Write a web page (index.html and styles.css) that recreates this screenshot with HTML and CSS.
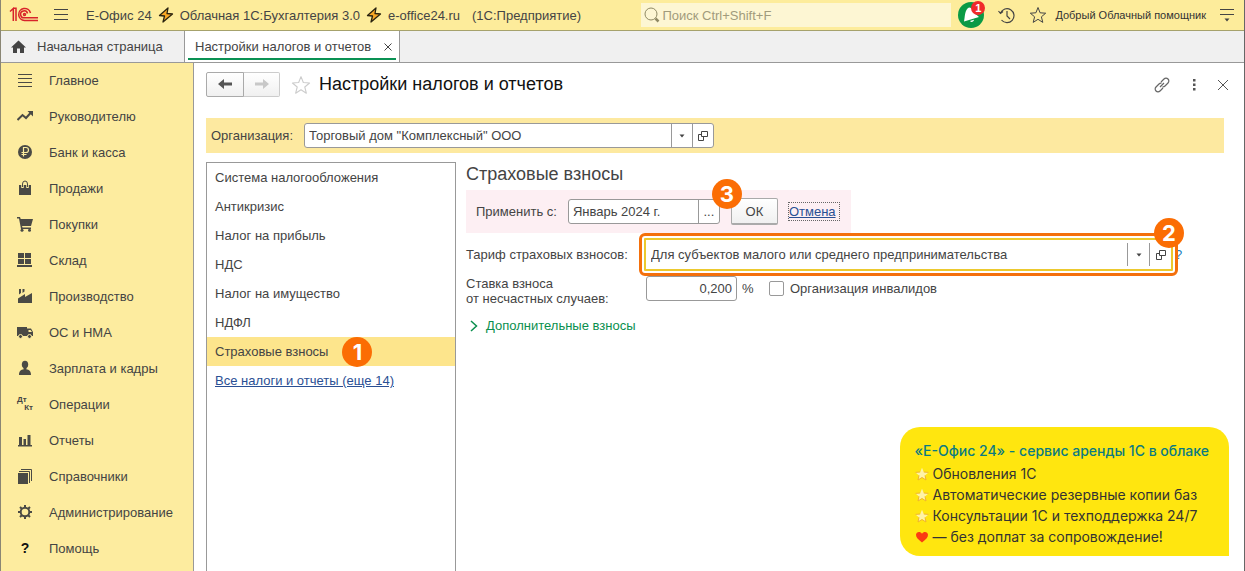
FILE: index.html
```
<!DOCTYPE html>
<html lang="ru">
<head>
  <meta charset="UTF-8">
  <meta name="viewport" content="width=device-width, initial-scale=1.0">
  <title>Настройки налогов и отчетов</title>
  <link rel="stylesheet" href="styles.css">
</head>
<body>
  <!-- Shared icons -->
  <svg class="sprite" width="0" height="0">
    <symbol id="bolt" viewBox="0 0 16 16"><path d="M10 1 1.500 8.500 6.500 9 5 15 14.500 7 9 6.500Z" fill="#f9a825" stroke="#2b2410" stroke-width="1.300" stroke-linejoin="round"/></symbol>
    <symbol id="open" viewBox="0 0 10 10"><path d="M3.500.5h6v5h-6zM3.500 3.500h-3v6h5v-4" fill="none" stroke="#444"/></symbol>
    <symbol id="down" viewBox="0 0 6 4"><path d="M.5.5h5L3 3.500Z" fill="#444"/></symbol>
    <symbol id="star" viewBox="0 0 18 18"><path d="m9 1.500 2.100 5.300 5.600.4-4.300 3.600 1.400 5.600L9 13.300l-4.800 3.100 1.400-5.600L1.300 7.200l5.600-.4Z" fill="none" stroke="currentColor" stroke-linejoin="round"/></symbol>
    <symbol id="gold-star" viewBox="0 0 14 14"><path d="m7 .8 1.800 4.200 4.700.4L10 8.400l1 4.600-4-2.500L3 13l1-4.600L.5 5.400 5.200 5Z" fill="#fff3a6"/><path d="m10 8.400 1 4.600-4-2.500L3 13l1-4.600M.5 5.400 5.200 5M13.500 5.400 8.800 5" fill="none" stroke="#f0b52c"/></symbol>
  </svg>

  <header class="topbar">
    <svg class="logo" width="30" height="16" viewBox="0 0 30 16" fill="none" stroke="#d8232a" stroke-width="1.500">
      <path d="M1 4.500 4.300 1.500V14M7 14V1.300H4.300"/>
      <path d="M21.500 6A6 6 0 1 0 15.500 13.500H29M18.500 6.500A3.500 3.500 0 1 0 15.500 10.800H29"/>
      <circle cx="15.500" cy="7.500" r="1"/>
    </svg>
    <button class="icon-btn menu-btn" aria-label="Меню">
      <svg width="14" height="12" viewBox="0 0 14 12" stroke="#444"><path d="M0 .5h14M0 5.500h14M0 10.500h14"/></svg>
    </button>
    <div class="app-title">
      <span>Е-Офис 24</span><svg width="16" height="16"><use href="#bolt"/></svg>
      <span>Облачная 1С:Бухгалтерия 3.0</span><svg width="16" height="16"><use href="#bolt"/></svg>
      <span>e-office24.ru</span><span class="platform">(1С:Предприятие)</span>
    </div>
    <div class="search">
      <svg width="16" height="16" viewBox="0 0 16 16" fill="none" stroke="#8f8964"><circle cx="7" cy="7" r="6"/><path d="m11.500 11.500 3 3" stroke-width="2.500"/></svg>
      <input type="search" placeholder="Поиск Ctrl+Shift+F" aria-label="Поиск">
    </div>
    <button class="icon-btn bell" aria-label="Уведомления">
      <svg width="26" height="26" viewBox="0 0 26 26"><circle cx="13" cy="13" r="13" fill="#0a9a45"/><path d="M11 5.500c4 0 5 4 6.500 6.500l3.500 3L6 19.500c1-4 .500-12 5-14Z" fill="#fff"/><path d="m12 19 4-1.200a2.200 2.200 0 0 1-4 1.200Z" fill="#fff"/></svg>
      <span class="bell-count">1</span>
    </button>
    <button class="icon-btn" aria-label="История">
      <svg width="17" height="17" viewBox="0 0 17 17" fill="none" stroke="#444" stroke-width="1.200"><path d="M2.500 6A7 7 0 1 1 3.500 13M.5 4l2 2.500L5 4.500M9 4v5l3 3"/></svg>
    </button>
    <button class="icon-btn" aria-label="Избранное"><svg width="18" height="18"><use href="#star"/></svg></button>
    <span class="user">Добрый Облачный помощник</span>
    <button class="icon-btn" aria-label="Настройки окна">
      <svg width="14" height="14" viewBox="0 0 14 14"><path d="M0 1.500h14M0 6.500h14" stroke="#444"/><path d="M4.500 10.500h5L7 13.500Z" fill="#444"/></svg>
    </button>
  </header>

  <nav class="tabs">
    <a class="tab home-tab" href="#">
      <svg width="15" height="13" viewBox="0 0 15 13"><path d="M7.500.5 0 7.500h2V13h4V8.500h3V13h4V7.500h2Z" fill="#444"/></svg>
      Начальная страница
    </a>
    <div class="tab active-tab">
      <a href="#">Настройки налогов и отчетов</a>
      <button class="icon-btn" aria-label="Закрыть вкладку"><svg width="8" height="8" viewBox="0 0 8 8" stroke="#444"><path d="m.5.5 7 7m0-7-7 7"/></svg></button>
    </div>
  </nav>

  <div class="workspace">
    <nav class="sidebar">
      <a href="#"><svg viewBox="0 0 16 16" stroke="#4a4a45"><path d="M1 2.500h14M1 6.500h14M1 10.500h14M1 14.500h14"/></svg>Главное</a>
      <a href="#"><svg viewBox="0 0 16 16"><path d="m.5 12 5-5 3.500 3L14 4.500" fill="none" stroke="#4a4a45" stroke-width="2"/><path d="M10.500 3H16v5.500Z" fill="#4a4a45"/></svg>Руководителю</a>
      <a href="#"><svg viewBox="0 0 16 16"><circle cx="8" cy="8" r="7" fill="#4a4a45"/><path d="M6.500 12.500v-9H9a2.300 2.300 0 0 1 0 5H4.500M4.500 10.500h5" fill="none" stroke="#fdee9f" stroke-width="1.200"/></svg>Банк и касса</a>
      <a href="#"><svg viewBox="0 0 16 16"><path d="M2 5h12v10H2z" fill="#4a4a45"/><path d="M5.500 8V4a2.500 3 0 0 1 5 0v4" fill="none" stroke="#fdee9f" stroke-width="2.500"/><path d="M5.500 7V4a2.500 3 0 0 1 5 0v3" fill="none" stroke="#4a4a45"/></svg>Продажи</a>
      <a href="#"><svg viewBox="0 0 16 16" fill="#4a4a45"><path d="M0 1h3l.7 2H16l-2 7H5l.5 1.500H14V13H4L2 2.500H0z"/><circle cx="5" cy="14.300" r="1.500"/><circle cx="12.500" cy="14.300" r="1.500"/></svg>Покупки</a>
      <a href="#"><svg viewBox="0 0 16 16" fill="#4a4a45"><path d="M1 1h6v5H1zM8 1h6v5H8zM1 7h6v5H1zM8 7h6v5H8zM0 13h15v2H0z"/></svg>Склад</a>
      <a href="#"><svg viewBox="0 0 16 16" fill="#4a4a45"><path d="M1 15v-4.500l7-4.500v3L15 5v10zM2 1h2v4L2 6.500zM5.500 1h2v2.500L5.500 5z"/></svg>Производство</a>
      <a href="#"><svg viewBox="0 0 16 16"><path d="M0 3h10v1.500h4L16 8v4H0z" fill="#4a4a45"/><path d="M11.500 6h2L15 8h-3.500z" fill="#fdee9f"/><g fill="#4a4a45" stroke="#fdee9f"><circle cx="3.500" cy="12.500" r="2"/><circle cx="12.500" cy="12.500" r="2"/></g></svg>ОС и НМА</a>
      <a href="#"><svg viewBox="0 0 16 16" fill="#4a4a45"><ellipse cx="8" cy="4.500" rx="3.200" ry="3.800"/><path d="M6.500 7h3v2.500h-3zM2 15c0-4 2-5.500 4.500-5.500h3C12 9.500 14 11 14 15z"/></svg>Зарплата и кадры</a>
      <a href="#"><span class="dtkt"><b>Дт</b><b>Кт</b></span>Операции</a>
      <a href="#"><svg viewBox="0 0 16 16" fill="#4a4a45"><path d="M1 13h14v1.500H1zM2 5h3v8H2zM6.500 7h2.500v6H6.500zM10.500 3h3v10h-3z"/></svg>Отчеты</a>
      <a href="#"><svg viewBox="0 0 16 16"><path d="M1 5h10v11H1z" fill="#4a4a45"/><path d="M2 3.500h10.500V15M4 1.500h10.500V13" fill="none" stroke="#4a4a45"/></svg>Справочники</a>
      <a href="#"><svg viewBox="0 0 16 16" fill="none" stroke="#4a4a45"><circle cx="8" cy="8" r="4.300" stroke-width="2"/><path d="M8 1v2.500M8 12.500V15M1 8h2.500M12.500 8H15M3 3l1.800 1.800M11.200 11.200 13 13M3 13l1.800-1.800M11.200 4.800 13 3" stroke-width="2"/></svg>Администрирование</a>
      <a href="#"><b class="question">?</b>Помощь</a>
    </nav>

    <main class="page">
      <div class="page-head">
        <div class="history-btns">
          <button aria-label="Назад"><svg width="14" height="10" viewBox="0 0 14 10" fill="#555"><path d="M0 5 6 0v3.500h8v3H6V10z"/></svg></button>
          <button aria-label="Вперед" disabled><svg width="14" height="10" viewBox="0 0 14 10" fill="#c8c8c8"><path d="M14 5 8 0v3.500H0v3h8V10z"/></svg></button>
        </div>
        <button class="icon-btn fav" aria-label="В избранное"><svg width="20" height="20"><use href="#star"/></svg></button>
        <h1>Настройки налогов и отчетов</h1>
        <div class="page-tools">
          <button class="icon-btn" aria-label="Ссылка"><svg width="16" height="16" viewBox="0 0 16 16" fill="none" stroke="#666" stroke-width="1.200"><path d="M7 5 10 2a2.800 2.800 0 0 1 4 4l-3 3a2.800 2.800 0 0 1-2.500.8M9 11l-3 3a2.800 2.800 0 0 1-4-4l3-3a2.800 2.800 0 0 1 2.500-.8M6 10l4-4"/></svg></button>
          <button class="icon-btn" aria-label="Еще"><svg width="4" height="12" viewBox="0 0 4 12" fill="#555"><path d="M1 0h2.500v2.500H1zM1 4.500h2.500V7H1zM1 9h2.500v2.500H1z"/></svg></button>
          <button class="icon-btn" aria-label="Закрыть"><svg width="10" height="10" viewBox="0 0 10 10" stroke="#555"><path d="m0 0 10 10M10 0 0 10"/></svg></button>
        </div>
      </div>

      <div class="org-bar">
        <label for="org">Организация:</label>
        <div class="field org-field">
          <input type="text" id="org" value="Торговый дом &quot;Комплексный&quot; ООО">
          <button aria-label="Выбрать организацию"><svg width="6" height="4"><use href="#down"/></svg></button>
          <button aria-label="Открыть организацию"><svg width="10" height="10"><use href="#open"/></svg></button>
        </div>
      </div>

      <div class="columns">
        <ul class="sections">
          <li><a href="#">Система налогообложения</a></li>
          <li><a href="#">Антикризис</a></li>
          <li><a href="#">Налог на прибыль</a></li>
          <li><a href="#">НДС</a></li>
          <li><a href="#">Налог на имущество</a></li>
          <li><a href="#">НДФЛ</a></li>
          <li class="selected"><a href="#">Страховые взносы</a><span class="step">1</span></li>
          <li><a class="link" href="#">Все налоги и отчеты (еще 14)</a></li>
        </ul>

        <form class="settings">
          <h2>Страховые взносы</h2>

          <div class="apply">
            <label for="from">Применить с:</label>
            <div class="field date-field">
              <input type="text" id="from" value="Январь 2024 г.">
              <button type="button" aria-label="Выбрать месяц">...</button>
            </div>
            <div class="ok">
              <button type="button">ОК</button>
              <span class="step step-corner">3</span>
            </div>
            <a class="link cancel" href="#">Отмена</a>
          </div>

          <div class="row">
            <label class="caption" for="tariff">Тариф страховых взносов:</label>
            <div class="marked">
              <div class="field tariff-field">
                <input type="text" id="tariff" value="Для субъектов малого или среднего предпринимательства">
                <button type="button" aria-label="Выбрать тариф"><svg width="6" height="4"><use href="#down"/></svg></button>
                <button type="button" aria-label="Открыть тариф"><svg width="10" height="10"><use href="#open"/></svg></button>
              </div>
              <span class="step step-end">2</span>
            </div>
            <a class="hint" href="#">?</a>
          </div>

          <div class="row rate-row">
            <label class="caption" for="rate">Ставка взноса<br>от несчастных случаев:</label>
            <div class="field rate-field"><input type="text" id="rate" value="0,200"></div>
            <span class="percent">%</span>
            <input type="checkbox" id="disabled-org">
            <label for="disabled-org">Организация инвалидов</label>
          </div>

          <button type="button" class="more">
            <svg width="8" height="12" viewBox="0 0 8 12" fill="none" stroke="#0a8f4e" stroke-width="1.500"><path d="m1 1 5.500 5L1 11"/></svg>
            Дополнительные взносы
          </button>
        </form>
      </div>
    </main>
  </div>

  <aside class="promo">
    <h3>«Е-Офис 24» - сервис аренды 1С в облаке</h3>
    <ul>
      <li><svg width="14" height="14"><use href="#gold-star"/></svg>Обновления 1С</li>
      <li><svg width="14" height="14"><use href="#gold-star"/></svg>Автоматические резервные копии баз</li>
      <li><svg width="14" height="14"><use href="#gold-star"/></svg>Консультации 1С и техподдержка 24/7</li>
      <li><svg width="14" height="14" viewBox="0 0 14 14"><path d="M7 12.500C3 9.500 1 7.500 1 4.800 1 1.500 5.500.8 7 3.800 8.500.8 13 1.500 13 4.800c0 2.700-2 4.700-6 7.700Z" fill="#fb3b12"/></svg>— без доплат за сопровождение!</li>
    </ul>
  </aside>
</body>
</html>
```
FILE: styles.css
```
* {
  box-sizing: border-box;
}
body {
  margin: 0;
  height: 100vh;
  display: flex;
  flex-direction: column;
  overflow: hidden;
  border-left: 1px solid #8a8674;
  border-right: 1px solid #666;
  font-family: "Liberation Sans", Arial, sans-serif;
  font-size: 13px;
  color: #444;
  background: #fff;
}
a {
  color: inherit;
  text-decoration: none;
}
ul {
  list-style: none;
  margin: 0;
  padding: 0;
}
h1, h2, h3 {
  margin: 0;
  font-weight: normal;
}
button, input {
  font: inherit;
  color: inherit;
}
svg {
  flex-shrink: 0;
}
.sprite {
  position: absolute;
}
.icon-btn {
  display: flex;
  padding: 0;
  border: none;
  background: none;
}
.link {
  color: #2a4f94;
  text-decoration: underline;
}

/* Top bar */
.topbar {
  display: flex;
  align-items: center;
  gap: 14px;
  height: 31px;
  padding: 0 10px 0 8px;
  background: #fdec9b;
  border-bottom: 1px solid #a6a26c;
}
.menu-btn {
  margin-left: 1px;
}
.app-title {
  display: flex;
  align-items: center;
  gap: 6px;
  margin-left: 4px;
  white-space: nowrap;
}
.platform {
  margin-left: 6px;
}
.search {
  display: flex;
  align-items: center;
  width: 310px;
  height: 24px;
  margin-left: auto;
  padding-left: 3px;
  background: #fdf6d3;
}
.search input {
  flex: 1;
  min-width: 0;
  padding: 0 2px;
  border: none;
  background: none;
}
.search input::placeholder {
  color: #a19b7c;
}
.bell {
  position: relative;
  margin-left: -7px;
}
.bell-count {
  position: absolute;
  top: -1px;
  right: -1px;
  width: 14px;
  border-radius: 7px;
  font-size: 11px;
  font-weight: bold;
  line-height: 14px;
  color: #fff;
  background: #f02a2a;
}
.user {
  margin-left: -6px;
  font-size: 11px;
  color: #333;
  white-space: nowrap;
}

/* Tabs */
.tabs {
  display: flex;
  height: 32px;
  background: #f0f0f0;
  border-bottom: 1px solid #999;
}
.tab {
  display: flex;
  align-items: center;
  border-right: 1px solid #999;
}
.home-tab {
  gap: 11px;
  width: 184px;
  padding-left: 10px;
}
.active-tab {
  gap: 13px;
  padding: 0 7px 0 10px;
  background: linear-gradient(#0a9153, #0a9153) center bottom 2px / calc(100% - 6px) 2px no-repeat #fff;
}

.workspace {
  flex: 1;
  display: flex;
  min-height: 0;
}

/* Sidebar */
.sidebar {
  width: 193px;
  flex-shrink: 0;
  background: #fdec9f;
  border-right: 1px solid #999;
}
.sidebar a {
  display: flex;
  align-items: center;
  gap: 16px;
  height: 36px;
  padding: 0 0 2px 16px;
}
.sidebar svg, .dtkt, .question {
  width: 16px;
  height: 16px;
}
.dtkt {
  display: flex;
  flex-direction: column;
  font-size: 8px;
  line-height: 8px;
}
.dtkt b:last-child {
  align-self: flex-end;
}
.question {
  font-size: 14px;
  line-height: 16px;
  text-align: center;
  color: #111;
}

/* Page */
.page {
  flex: 1;
  display: flex;
  flex-direction: column;
  min-width: 0;
  padding: 9px 16px 0 12px;
}
.page-head {
  display: flex;
  align-items: center;
  gap: 16px;
  height: 25px;
}
.page-head h1 {
  flex: 1;
  margin-left: -8px;
  font-size: 18px;
  color: #111;
}
.page-tools {
  display: flex;
  align-items: center;
  gap: 22px;
}
.history-btns {
  display: flex;
}
.history-btns button {
  width: 38px;
  height: 25px;
  padding: 0;
  border: 1px solid #aaa;
  border-radius: 2px 0 0 2px;
  background: linear-gradient(#fff, #f0f0f0);
}
.history-btns button + button {
  width: 37px;
  margin-left: -1px;
  border-color: #ccc;
  border-left-color: #aaa;
  border-radius: 0 2px 2px 0;
}
.fav {
  margin-left: -5px;
  color: #ccc;
}
.org-bar {
  display: flex;
  align-items: center;
  gap: 11px;
  height: 35px;
  margin: 21px 4px 0 0;
  padding-left: 5px;
  background: #fde9a0;
}

/* Input with side buttons */
.field {
  display: flex;
  height: 25px;
  overflow: hidden;
  border: 1px solid #999;
  border-radius: 3px;
  background: #fff;
}
.field input {
  flex: 1;
  min-width: 0;
  padding: 0 4px;
  border: none;
  background: none;
}
.field button {
  display: flex;
  align-items: center;
  justify-content: center;
  width: 21px;
  padding: 0;
  border: none;
  border-left: 1px solid #999;
  background: none;
}
.org-field {
  width: 410px;
}

/* Section list and form */
.columns {
  flex: 1;
  display: flex;
  gap: 10px;
  min-height: 0;
  margin-top: 9px;
}
.sections {
  width: 250px;
  flex-shrink: 0;
  border: 1px solid #999;
  border-bottom: none;
}
.sections li {
  display: flex;
  align-items: center;
  gap: 14px;
  height: 29px;
  padding-left: 8px;
}
.sections .selected {
  background: #fde58c;
}
.step {
  width: 30px;
  height: 30px;
  border-radius: 15px;
  font-family: Inter, sans-serif;
  font-size: 22px;
  font-weight: bold;
  line-height: 30px;
  text-align: center;
  color: #fff;
  background: #fb6d04;
}
.settings {
  flex: 1;
  min-width: 0;
}
.settings h2 {
  font-size: 18px;
  line-height: 24px;
}
.apply {
  display: flex;
  align-items: center;
  gap: 11px;
  width: 385px;
  height: 43px;
  margin-top: 4px;
  padding-left: 10px;
  background: #fdeff3;
}
.date-field {
  width: 152px;
}
.ok {
  position: relative;
}
.ok button {
  width: 47px;
  height: 27px;
  padding: 0;
  border: 1px solid #aaa;
  border-bottom-width: 2px;
  border-radius: 2px;
  background: linear-gradient(#fff, #f0f0f0);
}
.step-corner {
  position: absolute;
  top: -19px;
  left: -19px;
}
.cancel {
  padding: 1px 3px 1px 0;
  outline: 1px dotted #666;
}
.row {
  display: flex;
  align-items: center;
}
.caption {
  width: 173px;
  flex-shrink: 0;
  line-height: 15px;
}
.marked {
  position: relative;
  width: 539px;
  padding: 2px;
  border: 3px solid #f4700c;
  border-radius: 6px;
}
.tariff-field {
  height: 33px;
  border: 2px solid #ecc92e;
  border-radius: 1px;
}
.tariff-field input {
  padding-left: 5px;
}
.tariff-field button {
  width: 22px;
  height: 23px;
  margin: 3px 0;
}
.step-end {
  position: absolute;
  top: -18px;
  right: -9px;
}
.hint {
  margin-left: -3px;
  color: #1a7fc0;
}
.rate-row {
  align-items: flex-start;
}
.rate-row label + .field {
  margin: 0 5px 0 7px;
}
.rate-field {
  width: 91px;
}
.rate-field input {
  text-align: right;
}
.percent, .rate-row input + label {
  line-height: 25px;
}
.percent {
  width: 27px;
}
.rate-row input[type="checkbox"] {
  appearance: none;
  width: 15px;
  height: 15px;
  margin: 5px 6px 0 0;
  border: 1px solid #999;
  border-radius: 2px;
}
.more {
  display: flex;
  align-items: center;
  gap: 8px;
  margin-top: 12px;
  padding: 0 4px;
  border: none;
  background: none;
  color: #0a8f4e;
}

/* Promo bubble */
.promo {
  position: absolute;
  right: 16px;
  bottom: 15px;
  padding: 13px 20px 9px 15px;
  border-radius: 20px 20px 0 20px;
  font-family: Inter, sans-serif;
  font-size: 14px;
  line-height: 21px;
  color: #333;
  background: #ffe60f;
}
.promo h3 {
  margin-bottom: 2px;
  font-size: 14px;
  font-weight: 500;
  color: #0a7a82;
}
.promo li {
  display: flex;
  align-items: center;
  gap: 4px;
}
```
